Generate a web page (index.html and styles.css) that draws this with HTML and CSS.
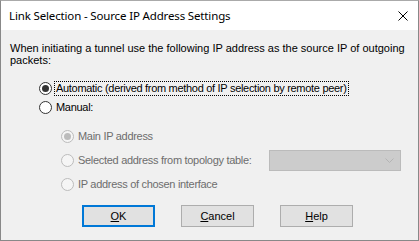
FILE: index.html
```html
<!DOCTYPE html>
<html>
<head>
<meta charset="utf-8">
<link rel="stylesheet" href="styles.css">
</head>
<body>
<div class="window">
  <div class="titlebar">
    <span class="title">Link Selection - Source IP Address Settings</span>
    <svg class="close" width="10" height="10" viewBox="0 0 10 10"><path d="M0.5 0.5 L9.5 9.5 M9.5 0.5 L0.5 9.5" stroke="#000" stroke-width="1" fill="none"/></svg>
  </div>
  <div class="content">
    <p class="intro">When initiating a tunnel use the following IP address as the source IP of outgoing packets:</p>
    <div class="row main-row first">
      <span class="radio checked"></span>
      <span class="label focus">Automatic (derived from method of IP selection by remote peer)</span>
    </div>
    <div class="row main-row">
      <span class="radio"></span>
      <span class="label">Manual:</span>
    </div>
    <div class="sub">
      <div class="row sub-row">
        <span class="radio disabled checked"></span>
        <span class="label dim">Main IP address</span>
      </div>
      <div class="row sub-row">
        <span class="radio disabled"></span>
        <span class="label dim">Selected address from topology table:</span>
        <span class="combo"><svg width="9" height="5" viewBox="0 0 9 5"><path d="M0.5 0.5 L4.5 4.5 L8.5 0.5" stroke="#b4b4b4" fill="none"/></svg></span>
      </div>
      <div class="row sub-row">
        <span class="radio disabled"></span>
        <span class="label dim">IP address of chosen interface</span>
      </div>
    </div>
    <div class="buttons">
      <button class="btn default"><u>O</u>K</button>
      <button class="btn"><u>C</u>ancel</button>
      <button class="btn"><u>H</u>elp</button>
    </div>
  </div>
</div>
</body>
</html>
```

FILE: styles.css
```css
* { box-sizing: border-box; }
html, body { margin: 0; padding: 0; background: #fff; }
.window {
  width: 419px;
  height: 241px;
  border: 1px solid #888;
  border-top-color: #aaa;
  display: flex;
  flex-direction: column;
  background: #f0f0f0;
  font-family: "Liberation Sans", Arial, sans-serif;
  font-size: 11px;
  color: #000;
}
.titlebar {
  height: 29px;
  background: #fff;
  display: flex;
  align-items: center;
  padding: 0 10px 0 8px;
}
.title {
  font-family: "Noto Sans", "Open Sans", sans-serif;
  font-size: 11.5px;
  letter-spacing: -0.15px;
  flex: 1;
  padding-bottom: 1px;
}
.close { display: block; margin-top: 0; }
.content {
  flex: 1;
  display: flex;
  flex-direction: column;
}
.intro {
  margin: 12px 0 0 9px;
  line-height: 12px;
  width: 395px;
}
.row {
  display: flex;
  align-items: center;
}
.main-row { height: 19px; padding-left: 38px; }
.main-row.first { margin-top: 13px; }
.sub { padding-left: 60px; margin-top: 7px; }
.sub-row { height: 24px; padding-right: 17px; }
.radio {
  width: 13px;
  height: 13px;
  border: 1px solid #333;
  border-radius: 50%;
  background: #fff;
  position: relative;
  flex: none;
}
.radio.checked::after {
  content: "";
  position: absolute;
  left: 2px;
  top: 2px;
  width: 7px;
  height: 7px;
  border-radius: 50%;
  background: #333;
}
.radio.disabled { border-color: #bcbcbc; background: #f5f5f5; }
.radio.disabled.checked::after { background: #bcbcbc; }
.label {
  margin-left: 2px;
  padding: 0 1px;
  line-height: 13px;
  letter-spacing: -0.3px;
  border: 1px solid transparent;
}
.label.focus { border: 1px dotted #000; }
.dim { color: #6d6d6d; }
.combo {
  margin-left: auto;
  width: 132px;
  height: 21px;
  background: #cccccc;
  border: 1px solid #bbbbbb;
  display: flex;
  align-items: center;
  justify-content: flex-end;
  padding-right: 6px;
}
.combo svg { display: block; }
.buttons {
  display: flex;
  gap: 26px;
  padding-left: 81px;
  margin-top: 9px;
}
.btn {
  width: 73px;
  height: 22px;
  background: #e1e1e1;
  border: 1px solid #adadad;
  font-family: "Liberation Sans", Arial, sans-serif;
  font-size: 11px;
  color: #000;
  padding: 0;
  margin: 0;
}
.btn.default { border: 2px solid #0078d7; }
```
